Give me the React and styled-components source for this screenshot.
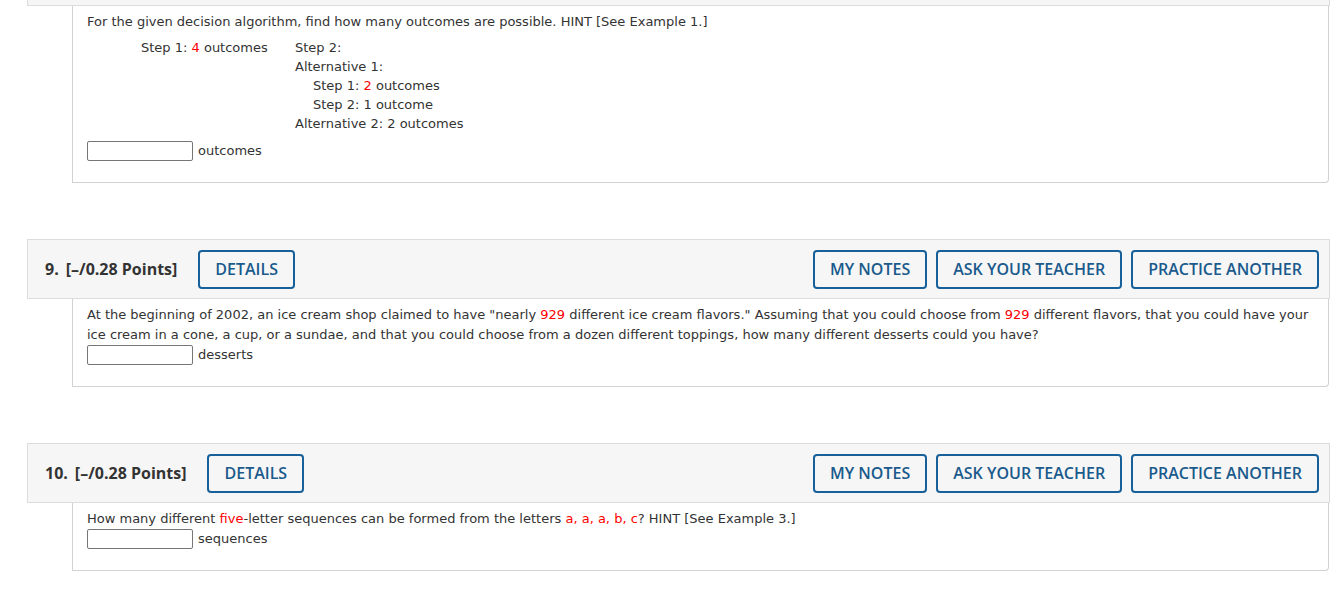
import React from 'react'
import styled, { createGlobalStyle } from 'styled-components'

const GlobalStyle = createGlobalStyle`
	html, body {
		margin: 0;
		padding: 0;
		background: #fff;
	}
	body {
		font-family: "DejaVu Sans", Verdana, sans-serif;
		color: #333;
	}
`

const Page = styled.div`
	width: 1303px;
	margin-left: 27px;
	padding-bottom: 30px;
`

const Question = styled.section`
	margin-bottom: 56px;
`

const Header = styled.div`
	display: flex;
	align-items: center;
	height: ${ ({ $stub }) => $stub ? '5px' : '58px' };
	padding: 0 10px 0 17px;
	background-color: #f6f6f6;
	border: 1px solid #dcdcdc;
	border-top: ${ ({ $stub }) => $stub ? 'none' : '1px solid #dcdcdc' };
	font-family: "Open Sans", sans-serif;
`

const Number = styled.span`
	font-size: 16px;
	font-weight: 700;
	color: #333;
	margin-right: 7px;
`

const Points = styled.span`
	font-size: 16px;
	font-weight: 700;
	color: #333;
	margin-right: 21px;
`

const Spacer = styled.div`
	flex: 1;
`

const Button = styled.button`
	height: 39px;
	padding: 0 15px;
	margin-left: ${ ({ $first }) => $first ? '0' : '9px' };
	background: transparent;
	border: 2px solid #17609a;
	border-radius: 4px;
	color: #1a5a8c;
	font-family: "Open Sans", sans-serif;
	font-size: 16px;
	font-weight: 600;
	cursor: pointer;
`

const Body = styled.div`
	margin-left: 45px;
	margin-right: 1px;
	padding: 6px 10px 21px 14px;
	border: 1px solid #d2d2d2;
	border-top: none;
	border-radius: 0 0 4px 0;
	font-size: 13px;
	line-height: 20px;
	color: #333;
`

const Red = styled.span`
	color: #f00;
`

const StepTable = styled.div`
	display: grid;
	grid-template-columns: 154px auto;
	margin: 6px 0 8px 54px;
	line-height: 19px;
`

const Indent = styled.div`
	padding-left: ${ ({ $level }) => $level * 18 }px;
`

const AnswerRow = styled.div`
	display: flex;
	align-items: center;
	height: 20px;
`

const AnswerBox = styled.input`
	box-sizing: border-box;
	width: 106px;
	height: 20px;
	margin: 0 5px 0 0;
	padding: 0 3px;
	border: 1px solid #767676;
	border-radius: 2px;
	font: inherit;
`

const Answer = ({ unit }) => (
	<AnswerRow>
		<AnswerBox type="text" />
		<span>{unit}</span>
	</AnswerRow>
)

const QuestionHeader = ({ number, points }) => (
	<Header>
		<Number>{number}.</Number>
		<Points>[–/{points} Points]</Points>
		<Button $first>DETAILS</Button>
		<Spacer />
		<Button $first>MY NOTES</Button>
		<Button>ASK YOUR TEACHER</Button>
		<Button>PRACTICE ANOTHER</Button>
	</Header>
)

export default function App() {
	return (
		<>
			<GlobalStyle />
			<Page>
				<Question>
					<Header $stub />
					<Body>
						<div>For the given decision algorithm, find how many outcomes are possible. HINT [See Example 1.]</div>
						<StepTable>
							<div>Step 1: <Red>4</Red> outcomes</div>
							<div>
								<Indent $level={0}>Step 2:</Indent>
								<Indent $level={0}>Alternative 1:</Indent>
								<Indent $level={1}>Step 1: <Red>2</Red> outcomes</Indent>
								<Indent $level={1}>Step 2: 1 outcome</Indent>
								<Indent $level={0}>Alternative 2: 2 outcomes</Indent>
							</div>
						</StepTable>
						<Answer unit="outcomes" />
					</Body>
				</Question>

				<Question>
					<QuestionHeader number={9} points="0.28" />
					<Body>
						<div>
							At the beginning of 2002, an ice cream shop claimed to have "nearly <Red>929</Red> different ice cream flavors." Assuming that you could choose from <Red>929</Red> different flavors, that you could have your ice cream in a cone, a cup, or a sundae, and that you could choose from a dozen different toppings, how many different desserts could you have?
						</div>
						<Answer unit="desserts" />
					</Body>
				</Question>

				<Question>
					<QuestionHeader number={10} points="0.28" />
					<Body>
						<div>
							How many different <Red>five</Red>-letter sequences can be formed from the letters <Red>a, a, a, b, c</Red>? HINT [See Example 3.]
						</div>
						<Answer unit="sequences" />
					</Body>
				</Question>
			</Page>
		</>
	)
}
